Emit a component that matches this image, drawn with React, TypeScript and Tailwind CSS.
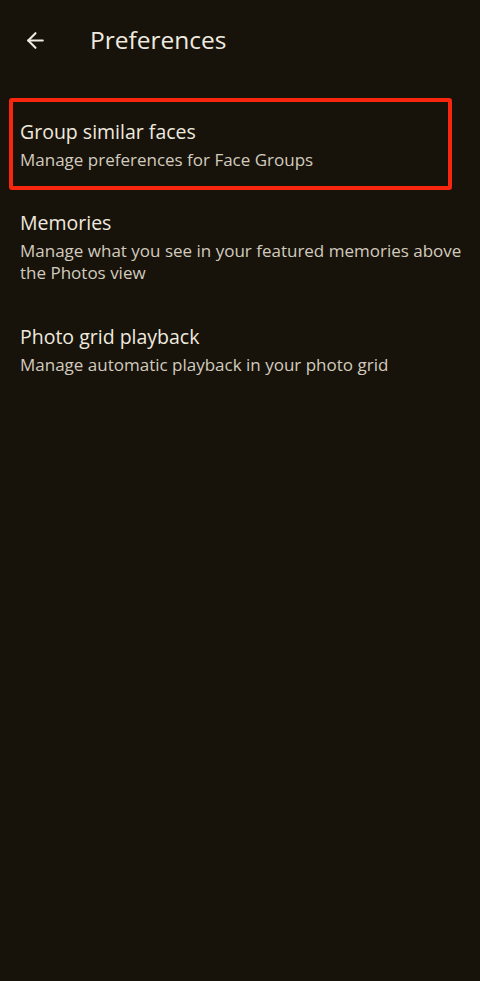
import React from "react";
import { ArrowLeft } from "lucide-react";

interface PrefItem {
  title: string;
  subtitle: string;
}

const items: PrefItem[] = [
  { title: "Memories", subtitle: "Manage what you see in your featured memories above the Photos view" },
  { title: "Photo grid playback", subtitle: "Manage automatic playback in your photo grid" },
];

const PrefRow: React.FC<PrefItem> = ({ title, subtitle }) => (
  <div className="flex flex-col gap-[4px]">
    <div className="text-[19.5px] leading-[26px] text-[#efeadf]">{title}</div>
    <div className="text-[17px] leading-[22px] text-[#d2cbbe]">{subtitle}</div>
  </div>
);

export default function App() {
  return (
    <div className="w-[480px] h-[981px] bg-[#17130b] font-['Open_Sans',sans-serif] overflow-hidden">
      {/* Top bar */}
      <div className="h-[80px] flex items-center">
        <div className="w-[90px] pl-[23px] flex items-center">
          <ArrowLeft size={25} strokeWidth={2} className="text-[#efeadf]" />
        </div>
        <h1 className="text-[24.5px] text-[#efeadf]">Preferences</h1>
      </div>

      <div className="pt-[18px]">
        {/* highlighted row */}
        <div className="ml-[9px] w-[443px] h-[92px] border-[4px] border-[#f8260f] rounded-[3px] pl-[7px] pt-[17px]">
          <PrefRow title="Group similar faces" subtitle="Manage preferences for Face Groups" />
        </div>

        {items.map((it) => (
          <div key={it.title} className="pl-[20px] pr-[8px] py-[20px]">
            <PrefRow {...it} />
          </div>
        ))}
      </div>
    </div>
  );
}
